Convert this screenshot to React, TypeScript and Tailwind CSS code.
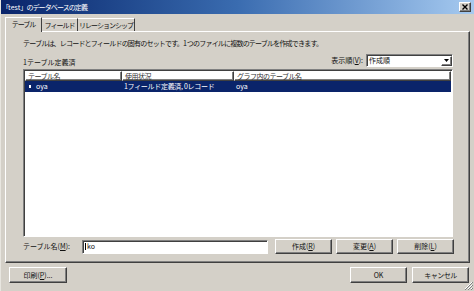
const raised =
  "border border-t-white border-l-white border-r-[#404040] border-b-[#404040] shadow-[inset_-1px_-1px_#808080]"
const sunken =
  "border border-t-[#808080] border-l-[#808080] border-r-white border-b-white shadow-[inset_1px_1px_#404040]"

function Btn({ label, className = "" }: { label: React.ReactNode; className?: string }) {
  return (
    <div className={`${raised} bg-[#d4d0c8] flex items-center justify-center ${className}`}>
      {label}
    </div>
  )
}

export default function App() {
  return (
    <div className="w-[474px] h-[291px] bg-[#d4d0c8] flex flex-col relative overflow-hidden text-[7px] leading-none text-[#111] font-['Noto_Sans_CJK_JP',sans-serif] border-l border-l-[#e8e6e0]">
      {/* title bar */}
      <div className="h-[14px] flex items-center justify-between pl-[1px] pr-[3px] bg-linear-to-r from-[#0a246a] via-[#3a6cb0] to-[#a6caf0] text-white">
        <span className="tracking-[-0.9px]">
          「<span className="tracking-normal">test</span>」のデータベースの定義
        </span>
        <div className={`${raised} w-[12px] h-[10px] bg-[#d4d0c8] flex items-center justify-center`}>
          <svg width="6" height="6" viewBox="0 0 6 6">
            <path d="M0.5 0.5L5.5 5.5M5.5 0.5L0.5 5.5" stroke="#000" strokeWidth="1.4" />
          </svg>
        </div>
      </div>

      {/* tabs */}
      <div className="flex items-end h-[17px] pl-[4px] relative z-10 tracking-[-1px]">
        <div className="w-[37px] h-[15px] flex items-center justify-center border-t border-l border-t-white border-l-white border-r border-r-[#404040] bg-[#d4d0c8] -mb-[1px] pb-[1px]">
          テーブル
        </div>
        <div className="w-[36px] h-[13px] flex items-center justify-center border-t border-t-white border-r border-r-[#404040]">
          フィールド
        </div>
        <div className="w-[57px] h-[13px] flex items-center justify-center border-t border-t-white border-r border-r-[#404040]">
          リレーションシップ
        </div>
      </div>

      {/* panel */}
      <div className="ml-[4px] w-[465px] h-[232px] flex flex-col pl-[17px] border border-t-white border-l-white border-r-[#404040] border-b-[#404040] shadow-[inset_-1px_-1px_#808080]">
        <div className="mt-[8px] h-[8px] tracking-[-0.8px]">
          テーブルは、レコードとフィールドの固有のセットです。<span className="tracking-normal">1</span>つのファイルに複数のテーブルを作成できます。
        </div>
        <div className="mt-[6px] flex items-center h-[13px] w-[430px]">
          <span className="flex-1 self-end pb-[1px]">1テーブル定義済</span>
          <span className="mr-[3px]">
            表示順(<span className="underline">V</span>):
          </span>
          <div className={`${sunken} bg-white w-[87px] h-[13px] flex items-center justify-between pl-[2px]`}>
            <span>作成順</span>
            <div className={`${raised} w-[11px] h-[10px] flex items-center justify-center`}>
              <svg width="5" height="3" viewBox="0 0 5 3">
                <path d="M0 0H5L2.5 3Z" fill="#000" />
              </svg>
            </div>
          </div>
        </div>

        {/* list */}
        <div className={`${sunken} mt-[2px] w-[430px] h-[168px] bg-white p-[1px] flex flex-col`}>
          <div className="flex h-[10px] tracking-[-0.5px] text-[#333]">
            <div className={`${raised} w-[97px] flex items-center pl-[2px]`}>テーブル名</div>
            <div className={`${raised} w-[112px] flex items-center pl-[2px]`}>使用状況</div>
            <div className={`${raised} flex-1 flex items-center pl-[2px]`}>グラフ内のテーブル名</div>
          </div>
          <div className="flex h-[11px] bg-[#0a246a] text-white items-center">
            <div className="w-[97px] flex items-center pl-[4px]">
              <span className="w-[2px] h-[3px] bg-white mr-[5px]" />
              oya
            </div>
            <div className="w-[112px] pl-[2px] tracking-[-0.3px]">1フィールド定義済, 0レコード</div>
            <div className="flex-1 pl-[2px]">oya</div>
          </div>
        </div>

        {/* name row */}
        <div className="mt-[2px] flex items-center h-[15px]">
          <span className="w-[59px]">
            テーブル名(<span className="underline">M</span>):
          </span>
          <div className={`${sunken} bg-white w-[186px] h-[14px] flex items-center pl-[2px]`}>
            <span className="border-l border-l-black pl-[1px]">ko</span>
          </div>
          <Btn className="ml-[7px] w-[57px] h-[15px]" label={<>作成(<span className="underline">R</span>)</>} />
          <Btn className="ml-[4px] w-[57px] h-[15px]" label={<>変更(<span className="underline">A</span>)</>} />
          <Btn className="ml-[4px] w-[57px] h-[15px]" label={<>削除(<span className="underline">L</span>)</>} />
        </div>
      </div>

      {/* footer */}
      <div className="mt-[4px] flex items-center h-[16px] pl-[8px] pr-[5px]">
        <Btn className="w-[58px] h-[16px]" label={<>印刷(<span className="underline">P</span>)...</>} />
        <div className="flex-1" />
        <Btn className="w-[57px] h-[16px]" label="OK" />
        <Btn className="ml-[5px] w-[57px] h-[16px] tracking-[-0.5px]" label="キャンセル" />
      </div>

      {/* resize grip */}
      <svg className="absolute right-[1px] bottom-[1px]" width="10" height="10" viewBox="0 0 10 10">
        <path d="M9 2L2 9M9 5L5 9M9 8L8 9" stroke="#fff" strokeWidth="1" />
        <path d="M10 2L2 10M10 5L5 10M10 8L8 10" stroke="#808080" strokeWidth="1" />
      </svg>
    </div>
  )
}
